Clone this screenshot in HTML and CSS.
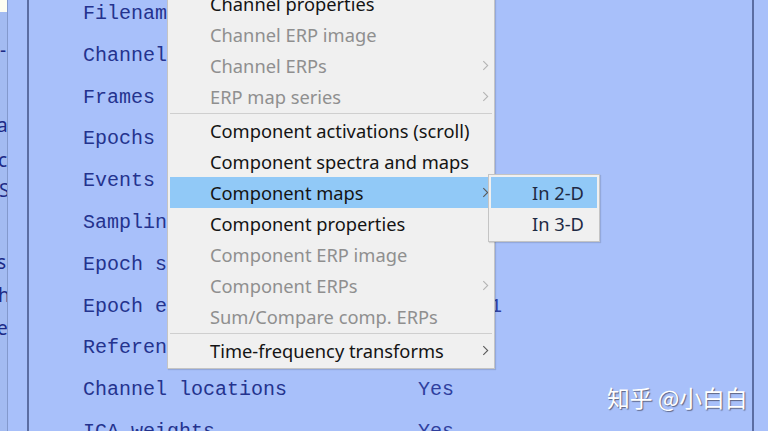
FILE: index.html
```html
<!DOCTYPE html>
<html lang="en">
<head>
  <meta charset="UTF-8">
  <title>EEGLAB - Plot menu</title>
  <link rel="stylesheet" href="styles.css">
</head>
<body>
  <div class="side">
    <div class="side-box"></div>
    <div class="side-row r1">-</div>
    <div class="side-row r2">a</div>
    <div class="side-row r3">co</div>
    <div class="side-row r4">Se</div>
    <div class="side-row r5">s</div>
    <div class="side-row r6">h</div>
    <div class="side-row r7">e</div>
  </div>
  <div class="gutter"></div>

  <div class="panel">
    <div class="info">
      <div class="label">Filename</div><div class="value">none</div>
      <div class="label">Channels per frame</div><div class="value">32</div>
      <div class="label">Frames per epoch</div><div class="value">384</div>
      <div class="label">Epochs</div><div class="value">80</div>
      <div class="label">Events</div><div class="value">157</div>
      <div class="label">Sampling rate (Hz)</div><div class="value">128</div>
      <div class="label">Epoch start (sec)</div><div class="value">-1.000</div>
      <div class="label">Epoch end (sec)</div><div class="value">1.99201</div>
      <div class="label">Reference</div><div class="value">none</div>
      <div class="label">Channel locations</div><div class="value">Yes</div>
      <div class="label">ICA weights</div><div class="value">Yes</div>
    </div>
  </div>
  <div class="edge"></div>

  <div class="menu">
    <div class="item">Channel properties</div>
    <div class="item off">Channel ERP image</div>
    <div class="item off sub">Channel ERPs<svg class="arrow" viewBox="0 0 6 10"><path d="M1 1l4 4-4 4"/></svg></div>
    <div class="item off sub">ERP map series<svg class="arrow" viewBox="0 0 6 10"><path d="M1 1l4 4-4 4"/></svg></div>
    <div class="sep"></div>
    <div class="item">Component activations (scroll)</div>
    <div class="item">Component spectra and maps</div>
    <div class="item hot sub">Component maps<svg class="arrow" viewBox="0 0 6 10"><path d="M1 1l4 4-4 4"/></svg></div>
    <div class="item">Component properties</div>
    <div class="item off">Component ERP image</div>
    <div class="item off sub">Component ERPs<svg class="arrow" viewBox="0 0 6 10"><path d="M1 1l4 4-4 4"/></svg></div>
    <div class="item off">Sum/Compare comp. ERPs</div>
    <div class="sep"></div>
    <div class="item sub">Time-frequency transforms<svg class="arrow" viewBox="0 0 6 10"><path d="M1 1l4 4-4 4"/></svg></div>
  </div>

  <div class="menu submenu">
    <div class="item hot">In 2-D</div>
    <div class="item">In 3-D</div>
  </div>

  <div class="mark">知乎 @小白白</div>
</body>
</html>
```

FILE: styles.css
```css
body {
  margin: 0;
  height: 431px;
  overflow: hidden;
  display: flex;
  background: #a8c0fa;
  position: relative;
}

.side {
  width: 7px;
  flex: none;
  overflow: hidden;
  background: #a3bbf1;
  border-right: 1px solid #8399cc;
  font-family: "Noto Sans", sans-serif;
  font-size: 19px;
  color: #1c2a86;
}
.side-box {
  height: 12px;
  background: #fdfdf2;
}
.side-row {
  height: 24px;
  line-height: 24px;
  white-space: nowrap;
}
.r1 { margin-top: 26px; }
.r2 { margin-top: 51px; margin-left: -3px; }
.r3 { margin-top: 11px; margin-left: -2px; }
.r4 { margin-top: 6px; margin-left: -1px; }
.r5 { margin-top: 48px; margin-left: -3px; }
.r6 { margin-top: 9px; margin-left: -2px; }
.r7 { margin-top: 9px; margin-left: -3px; }

.gutter {
  width: 19px;
  flex: none;
}

.panel {
  width: 723px;
  flex: none;
  border-left: 2px solid #5b6da2;
  border-right: 2px solid #5b6da2;
  overflow: hidden;
}
.info {
  display: grid;
  grid-template-columns: 335px auto;
  margin-top: -7px;
  padding-left: 54px;
  font-family: "Liberation Mono", monospace;
  font-size: 20px;
  line-height: 41.8px;
  color: #24338e;
  white-space: nowrap;
}
.value {
  color: #2f3f9e;
}

.menu {
  position: absolute;
  left: 167px;
  top: -15px;
  width: 326px;
  padding: 2px 0;
  background: #f0f0f0;
  border: 1px solid #c4c4c4;
  box-shadow: 1px 1px 1px rgba(0, 0, 0, 0.12);
  font-family: "Noto Sans", sans-serif;
  font-size: 18.3px;
  color: #141414;
}
.item {
  height: 31px;
  line-height: 30px;
  margin: 0 2px;
  padding-left: 40px;
  display: flex;
  align-items: center;
  white-space: nowrap;
}
.item.off {
  color: #8f8f8f;
}
.item.hot {
  background: #91c9f7;
}
.arrow {
  width: 7px;
  height: 11px;
  margin-left: auto;
  margin-right: 3px;
  fill: none;
  stroke: #5a5a5a;
  stroke-width: 1;
}
.off .arrow {
  stroke: #b4b4b4;
}
.sep {
  height: 1px;
  margin: 0 2px 1px;
  border-bottom: 1px solid #cfcfcf;
}

.submenu {
  left: 488px;
  top: 174px;
  width: 110px;
}
.submenu .item {
  padding-left: 41px;
  color: #1e2a44;
}

.mark {
  position: absolute;
  left: 607px;
  top: 381px;
  font-family: "Noto Sans CJK SC", sans-serif;
  font-size: 22.8px;
  color: #ffffff;
  text-shadow: 1px 1px 1px rgba(60, 60, 80, 0.7);
}
```
